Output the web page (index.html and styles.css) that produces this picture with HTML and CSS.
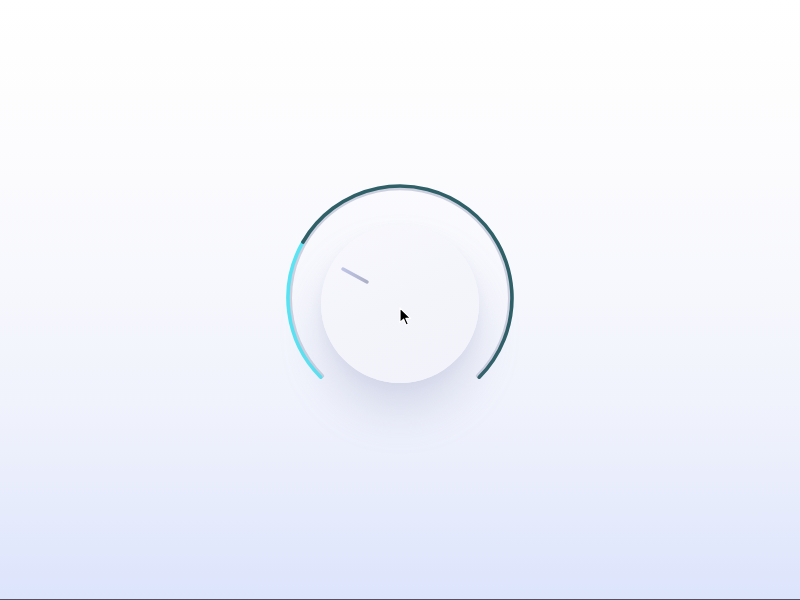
FILE: index.html
```html
<!DOCTYPE html>
<html>
<head>
<meta charset="utf-8">
<link rel="stylesheet" href="styles.css">
</head>
<body>
<main class="stage">
  <div class="dial">
    <svg class="ring" width="240" height="240" viewBox="0 0 240 240">
      <path class="track" d="M42.1 197.9 A110 110 0 1 1 197.9 197.9"/>
      <path class="fill-cyan" d="M40.8 199.2 A112 112 0 0 1 23 64"/>
      <path class="fill-teal" d="M23 64 A112 112 0 1 1 199.2 199.2"/>
    </svg>
    <div class="knob">
      <svg class="mark" width="158" height="158" viewBox="0 0 158 158">
        <defs>
          <linearGradient id="mg" x1="0" y1="0" x2="1" y2="0">
            <stop offset="0" stop-color="#c0c5e6"/>
            <stop offset="1" stop-color="#acb0c6"/>
          </linearGradient>
        </defs>
        <line x1="22" y1="44" x2="46" y2="57" stroke="url(#mg)" stroke-width="3.5" stroke-linecap="round"/>
      </svg>
      <svg class="cursor" width="14" height="20" viewBox="0 0 14 20">
        <path d="M1 1 L1 15.5 L4.6 12.2 L7.1 18 L9.4 17 L6.9 11.4 L11.6 11.4 Z" fill="#000" stroke="#fff" stroke-width="1.2" stroke-linejoin="round"/>
      </svg>
    </div>
  </div>
</main>
</body>
</html>
```
FILE: styles.css
```css
html, body {
  margin: 0;
  padding: 0;
}
body {
  width: 800px;
  height: 600px;
  overflow: hidden;
  background: linear-gradient(to bottom, #ffffff 0%, #fcfcfe 25%, #f6f7fd 50%, #eff2fc 70%, #e6ebfc 85%, #dce4fc 100%);
  border-bottom: 1px solid #4e5366;
  box-sizing: border-box;
  font-family: "Liberation Sans", sans-serif;
}
.stage {
  display: flex;
  justify-content: center;
  padding-top: 178px;
}
.dial {
  width: 240px;
  height: 240px;
  display: grid;
}
.ring, .knob {
  grid-area: 1 / 1;
}
.ring {
  display: block;
  position: relative;
  z-index: 1;
}
.track {
  fill: none;
  stroke: #cdd0df;
  stroke-width: 4;
  stroke-linecap: round;
}
.fill-cyan {
  fill: none;
  stroke: #5ae3f2;
  stroke-width: 3.6;
  stroke-linecap: round;
}
.fill-teal {
  fill: none;
  stroke: #2f5f67;
  stroke-width: 3.6;
  stroke-linecap: round;
}
.knob {
  place-self: center;
  margin-top: 12px;
  width: 158px;
  height: 158px;
  border-radius: 50%;
  background: linear-gradient(160deg, #f8f8fd 0%, #f4f5fb 50%, #f2f3fa 100%);
  box-shadow: 0 30px 40px rgba(150, 158, 195, 0.28), 0 6px 12px rgba(180, 185, 215, 0.14);
  position: relative;
  z-index: 2;
}
.mark {
  display: block;
}
.cursor {
  position: absolute;
  left: 78px;
  top: 82px;
}
```
